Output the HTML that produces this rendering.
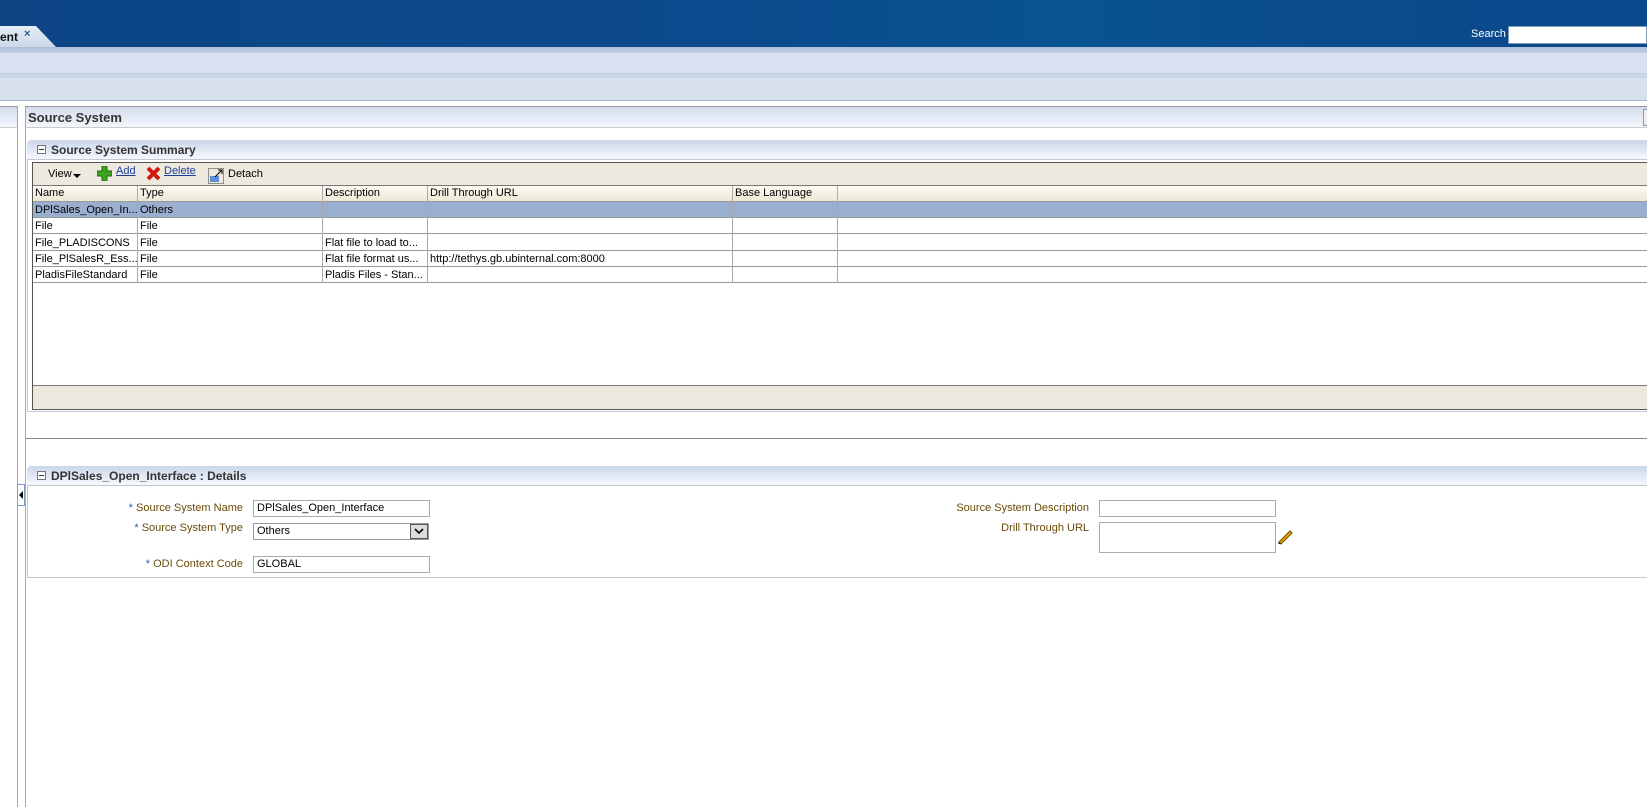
<!DOCTYPE html>
<html><head><meta charset="utf-8"><style>
*{box-sizing:border-box;margin:0;padding:0}
body{width:1647px;height:807px;overflow:hidden;background:#fff;font-family:"Liberation Sans",sans-serif;font-size:11px;color:#000;position:relative}
.a{position:absolute;white-space:nowrap}
.hdr{left:0;top:0;width:1647px;height:47px;background:linear-gradient(90deg,#0d4585 0%,#0b4a8c 45%,#085490 65%,#0a4b8c 80%,#094a8c 100%)}
.cell{position:absolute;height:16px;line-height:15px;padding-left:2px;border-right:1px solid #aaa;white-space:nowrap;overflow:hidden}
.row{position:absolute;left:33px;width:1614px;height:16px;border-bottom:1px solid #999}
.lbl{position:absolute;color:#6b4a06;text-align:right;font-size:11px;white-space:nowrap}
.lbl b{color:#2e5ea8;font-weight:normal}
.inp{position:absolute;border:1px solid #aaa;background:#fff;padding-left:3px;line-height:15px;font-size:11px}
</style></head><body>
<div class="a hdr"></div>
<div class="a" style="left:0;top:26px;width:56px;height:21px;background:linear-gradient(#e6eef6,#cbd9e7);clip-path:polygon(0 0,36px 0,56px 21px,0 21px)"></div>
<div class="a" style="left:0;top:30px;font-weight:bold;font-size:12px;color:#111">ent</div>
<div class="a" style="left:24px;top:28px;font-weight:bold;font-size:11px;color:#2a5a9a">×</div>
<div class="a" style="left:1471px;top:28px;color:#fff;font-size:11px">Search</div>
<div class="a" style="left:1508px;top:26px;width:139px;height:18px;background:#fff;border:1px solid #7f9db9"></div>
<div class="a" style="left:0;top:47px;width:1647px;height:6px;background:linear-gradient(#aebfd6,#c2cfe2)"></div>
<div class="a" style="left:0;top:53px;width:1647px;height:20px;background:#d7e1ef"></div>
<div class="a" style="left:0;top:73px;width:1647px;height:5px;background:#c9d6e6;border-top:1px solid #bfcde0"></div>
<div class="a" style="left:0;top:78px;width:1647px;height:23px;background:#d6e1ed;border-bottom:1px solid #a9b8c9"></div>
<div class="a" style="left:0;top:106px;width:18px;height:701px;border-right:1px solid #a0a8b0;border-top:1px solid #999"></div>
<div class="a" style="left:25px;top:106px;width:1622px;height:701px;border-left:1px solid #a0a8b0;border-top:1px solid #999"></div>
<div class="a" style="left:0;top:107px;width:17px;height:21px;background:linear-gradient(#d2dcec,#f4f7fd);border-bottom:1px solid #ccc"></div>
<div class="a" style="left:26px;top:107px;width:1621px;height:21px;background:linear-gradient(#d2dcec,#f4f7fd);border-bottom:1px solid #ccc"></div>
<div class="a" style="left:28px;top:110px;font-weight:bold;font-size:13px;color:#333">Source System</div>
<div class="a" style="left:1643px;top:109px;width:6px;height:17px;border:1px solid #999;background:#eee"></div>
<div class="a" style="left:27px;top:140px;width:1620px;height:20px;background:linear-gradient(#cad6ea,#f6f8fd);border-bottom:1px solid #c0c8d4;border-radius:4px 0 0 0"></div>
<div class="a" style="left:37px;top:145px;width:9px;height:9px;border:1px solid #777;background:#fff"></div>
<div class="a" style="left:39px;top:149px;width:5px;height:1px;background:#333"></div>
<div class="a" style="left:51px;top:143px;font-weight:bold;font-size:12px;color:#333">Source System Summary</div>
<div class="a" style="left:27px;top:160px;width:1px;height:252px;background:#c0c8d4"></div>
<div class="a" style="left:27px;top:411px;width:1620px;height:1px;background:#c0c8d4"></div>
<div class="a" style="left:32px;top:162px;width:1615px;height:248px;border:1px solid #555;border-right:none;background:#fff"></div>
<div class="a" style="left:33px;top:163px;width:1614px;height:23px;background:#ede9df;border-bottom:1px solid #777"></div>
<div class="a" style="left:48px;top:168px;font-size:11px">View</div>
<div class="a" style="left:73px;top:174px;width:0;height:0;border-left:4px solid transparent;border-right:4px solid transparent;border-top:4px solid #000"></div>
<svg class="a" style="left:97px;top:166px" width="15" height="15"><path d="M5 0h5v5h5v5h-5v5h-5v-5h-5v-5h5z" fill="#3aa61e" stroke="#1d6a0c" stroke-width="1"/></svg>
<div class="a" style="left:116px;top:165px;color:#1d3f9a;text-decoration:underline">Add</div>
<svg class="a" style="left:146px;top:166px" width="15" height="15"><path d="M2 2L13 13M13 2L2 13" stroke="#d21b0c" stroke-width="4"/></svg>
<div class="a" style="left:164px;top:165px;color:#1d3f9a;text-decoration:underline">Delete</div>
<svg class="a" style="left:208px;top:168px" width="16" height="16"><rect x="0.5" y="0.5" width="15" height="15" fill="none" stroke="#333" stroke-dasharray="1 1"/><rect x="2" y="8" width="9" height="6" fill="#5b8fd6"/><path d="M7 9L14 2M10 2h4v4" stroke="#000" fill="none"/></svg>
<div class="a" style="left:228px;top:168px">Detach</div>
<div class="a" style="left:33px;top:186px;width:1614px;height:16px;background:linear-gradient(#fdfbf3,#ece7d6);border-bottom:1px solid #999"></div>
<div class="cell" style="left:33px;top:186px;width:105px">Name</div>
<div class="cell" style="left:138px;top:186px;width:185px">Type</div>
<div class="cell" style="left:323px;top:186px;width:105px">Description</div>
<div class="cell" style="left:428px;top:186px;width:305px">Drill Through URL</div>
<div class="cell" style="left:733px;top:186px;width:105px">Base Language</div>
<div class="row" style="top:202px;background:#9aafd0"></div>
<div class="row" style="top:218px"></div>
<div class="row" style="top:235px"></div>
<div class="row" style="top:251px"></div>
<div class="row" style="top:267px"></div>
<div class="cell" style="left:33px;top:202px;width:105px;height:81px"></div>
<div class="cell" style="left:138px;top:202px;width:185px;height:81px"></div>
<div class="cell" style="left:323px;top:202px;width:105px;height:81px"></div>
<div class="cell" style="left:428px;top:202px;width:305px;height:81px"></div>
<div class="cell" style="left:733px;top:202px;width:105px;height:81px"></div>
<div class="a" style="left:35px;top:204px">DPlSales_Open_In...</div><div class="a" style="left:140px;top:204px">Others</div>
<div class="a" style="left:35px;top:220px">File</div><div class="a" style="left:140px;top:220px">File</div>
<div class="a" style="left:35px;top:237px">File_PLADISCONS</div><div class="a" style="left:140px;top:237px">File</div><div class="a" style="left:325px;top:237px">Flat file to load to...</div>
<div class="a" style="left:35px;top:253px">File_PlSalesR_Ess...</div><div class="a" style="left:140px;top:253px">File</div><div class="a" style="left:325px;top:253px">Flat file format us...</div><div class="a" style="left:430px;top:253px">http://tethys.gb.ubinternal.com:8000</div>
<div class="a" style="left:35px;top:269px">PladisFileStandard</div><div class="a" style="left:140px;top:269px">File</div><div class="a" style="left:325px;top:269px">Pladis Files - Stan...</div>
<div class="a" style="left:33px;top:385px;width:1614px;height:24px;background:#ede9df;border-top:1px solid #777"></div>
<div class="a" style="left:26px;top:438px;width:1621px;height:1px;background:#888"></div>
<div class="a" style="left:27px;top:466px;width:1620px;height:20px;background:linear-gradient(#cad6ea,#f6f8fd);border-bottom:1px solid #c0c8d4;border-radius:4px 0 0 0"></div>
<div class="a" style="left:37px;top:471px;width:9px;height:9px;border:1px solid #777;background:#fff"></div>
<div class="a" style="left:39px;top:475px;width:5px;height:1px;background:#333"></div>
<div class="a" style="left:51px;top:469px;font-weight:bold;font-size:12px;color:#333">DPlSales_Open_Interface : Details</div>
<div class="a" style="left:27px;top:486px;width:1px;height:92px;background:#c0c8d4"></div>
<div class="a" style="left:27px;top:577px;width:1620px;height:1px;background:#c0c8d4"></div>
<div class="a" style="left:17px;top:484px;width:8px;height:22px;border:1px solid #7a9cc6;background:#fff"></div>
<div class="a" style="left:19px;top:491px;width:0;height:0;border-top:4px solid transparent;border-bottom:4px solid transparent;border-right:4px solid #000"></div>
<div class="lbl" style="right:1404px;top:502px"><b>*</b> Source System Name</div>
<div class="lbl" style="right:1404px;top:522px"><b>*</b> Source System Type</div>
<div class="lbl" style="right:1404px;top:558px"><b>*</b> ODI Context Code</div>
<div class="inp" style="left:253px;top:500px;width:177px;height:17px">DPlSales_Open_Interface</div>
<div class="inp" style="left:253px;top:523px;width:176px;height:17px;border-color:#999">Others</div>
<div class="a" style="left:410px;top:524px;width:18px;height:15px;border:1px solid #555;background:#ddd"></div>
<svg class="a" style="left:414px;top:528px" width="10" height="7"><path d="M1 1L5 5L9 1" stroke="#000" stroke-width="1.6" fill="none"/></svg>
<div class="inp" style="left:253px;top:556px;width:177px;height:17px">GLOBAL</div>
<div class="lbl" style="right:558px;top:502px">Source System Description</div>
<div class="lbl" style="right:558px;top:522px">Drill Through URL</div>
<div class="inp" style="left:1099px;top:500px;width:177px;height:17px"></div>
<div class="inp" style="left:1099px;top:522px;width:177px;height:31px"></div>
<svg class="a" style="left:1276px;top:527px" width="18" height="18"><path d="M3 15L14 4L16 6L5 17Z" fill="#f0a800" stroke="#6a4a00"/><path d="M3 15L2 17L5 17" fill="#333"/></svg>
</body></html>
